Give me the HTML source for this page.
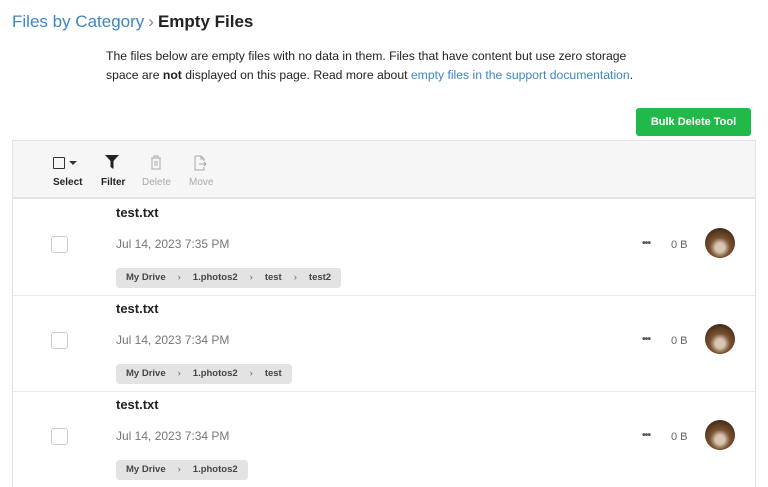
<!DOCTYPE html>
<html><head><style>
*{box-sizing:border-box;margin:0;padding:0}
html,body{width:768px;height:487px;overflow:hidden}
body{background:#fff;font-family:"Liberation Sans",sans-serif;color:#222;position:relative}
.a{position:absolute}
.crumb{left:12px;top:12px;font-size:17px}
.crumb .l{color:#3d85c6}
.crumb .s{color:#888;margin:0 4px}
.desc{left:106px;top:47px;width:540px;font-size:12.2px;line-height:19px;color:#222}
.desc a{color:#3d85c6;text-decoration:none}
.btn{left:636px;top:108px;width:115px;height:28px;background:#21b94a;border-radius:3px;color:#fff;font-size:11px;font-weight:bold;text-align:center;line-height:28px}
.box{left:12px;top:140px;width:744px;height:348px;border:1px solid #e2e2e2}
.hdr{left:13px;top:141px;width:742px;height:58px;background:#f6f6f7;border-bottom:2px solid #e4e4e4}
.tb{top:177px;font-size:10px;font-weight:bold}
.row{left:13px;width:742px;border-bottom:1px solid #e8e8e8;height:96px}
.cb{width:17px;height:17px;border:1px solid #ccc;border-radius:3px;left:38px;top:36px;background:#fff}
.nm{left:103px;top:5px;font-size:13px;font-weight:bold}
.dt{left:103px;top:37px;font-size:12px;color:#777}
.pth{left:103px;top:68px;height:20px;background:#e3e3e3;border-radius:3px;font-size:9.5px;font-weight:bold;color:#444;line-height:20px;padding:0 10px;white-space:nowrap}
.pth i{font-style:normal;margin:0 12px;color:#666;font-weight:normal}
.dots{left:629px;top:37px;font-size:10.5px;color:#555;letter-spacing:-1px;font-weight:bold}
.sz{left:658px;top:39px;font-size:11px;color:#666}
.av{left:692px;top:28px;width:30px;height:30px;border-radius:50%;background:radial-gradient(circle at 50% 65%,#d8c7b0 0 18%,#7a5332 40%,#4a2f1c 75%)}
</style></head><body>
<div class="a crumb"><span class="l">Files by Category</span><span class="s">›</span><b>Empty Files</b></div>
<div class="a desc">The files below are empty files with no data in them. Files that have content but use zero storage space are <b>not</b> displayed on this page. Read more about <a>empty files in the support documentation</a>.</div>
<div class="a btn">Bulk Delete Tool</div>
<div class="a box"></div>
<div class="a hdr"></div>
<div class="a" style="left:53px;top:157px;width:12px;height:12px;border:1.5px solid #333;border-radius:1px"></div>
<div class="a" style="left:69px;top:161px;width:0;height:0;border-left:4px solid transparent;border-right:4px solid transparent;border-top:4px solid #333"></div>
<svg class="a" style="left:105px;top:155px" width="14" height="15" viewBox="0 0 14 15"><path d="M0 0H14L8.5 6V14L5.5 12V6Z" fill="#222"/></svg>
<svg class="a" style="left:150px;top:155px" width="12" height="15" viewBox="0 0 12 15" fill="none" stroke="#aaa"><path d="M1 3H11M4 3V1H8V3M2 3V14H10V3M5 6V11M7 6V11"/></svg>
<svg class="a" style="left:194px;top:155px" width="13" height="16" viewBox="0 0 13 16" fill="none" stroke="#aaa"><path d="M1 1H7L10 4V6M1 1V15H10V12M7 1V4H10M5 9H12M10 7L12 9L10 11"/></svg>
<div class="a tb" style="left:53px">Select</div>
<div class="a tb" style="left:101px">Filter</div>
<div class="a tb" style="left:142px;color:#aaa;font-weight:normal">Delete</div>
<div class="a tb" style="left:189px;color:#aaa;font-weight:normal">Move</div>

<div class="a row" style="top:200px"><div class="a cb"></div><div class="a nm">test.txt</div><div class="a dt">Jul 14, 2023 7:35 PM</div><div class="a pth">My Drive<i>›</i>1.photos2<i>›</i>test<i>›</i>test2</div><div class="a dots">•••</div><div class="a sz">0 B</div><div class="a av"></div></div>
<div class="a row" style="top:296px"><div class="a cb"></div><div class="a nm">test.txt</div><div class="a dt">Jul 14, 2023 7:34 PM</div><div class="a pth">My Drive<i>›</i>1.photos2<i>›</i>test</div><div class="a dots">•••</div><div class="a sz">0 B</div><div class="a av"></div></div>
<div class="a row" style="top:392px"><div class="a cb"></div><div class="a nm">test.txt</div><div class="a dt">Jul 14, 2023 7:34 PM</div><div class="a pth">My Drive<i>›</i>1.photos2</div><div class="a dots">•••</div><div class="a sz">0 B</div><div class="a av"></div></div>
</body></html>
